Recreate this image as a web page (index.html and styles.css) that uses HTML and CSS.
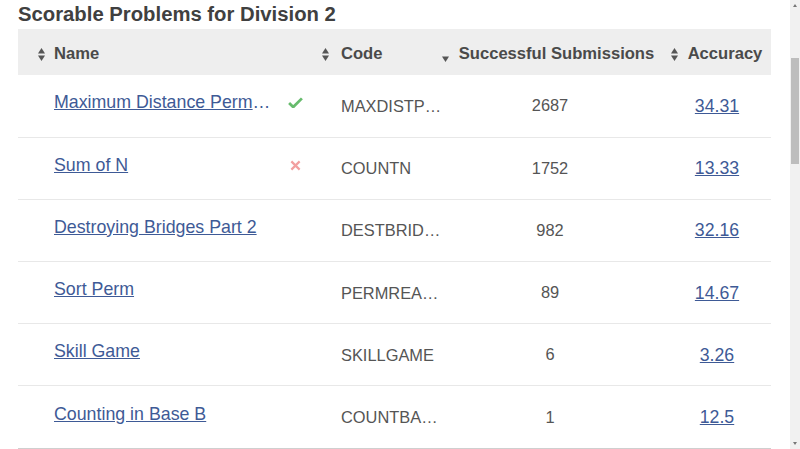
FILE: index.html
```html
<!DOCTYPE html>
<html lang="en">
<head>
<meta charset="utf-8">
<title>Scorable Problems for Division 2</title>
<link rel="stylesheet" href="styles.css">
</head>
<body>
<div class="page">
  <main class="main">
    <h2 class="title">Scorable Problems for Division 2</h2>
    <table class="problems">
      <colgroup>
        <col class="c-name"><col class="c-code"><col class="c-subs"><col class="c-acc">
      </colgroup>
      <thead>
        <tr>
          <th class="h-name"><span class="hcell"><svg class="sort" viewBox="0 0 7 13"><path d="M0 5.5 3.5 0 7 5.5Z"/><path d="M0 7.5 3.5 13 7 7.5Z"/></svg><span>Name</span></span></th>
          <th class="h-code"><span class="hcell"><svg class="sort" viewBox="0 0 7 13"><path d="M0 5.5 3.5 0 7 5.5Z"/><path d="M0 7.5 3.5 13 7 7.5Z"/></svg><span>Code</span></span></th>
          <th class="h-subs"><span class="hcell center"><svg class="sort desc" viewBox="0 0 7 13"><path d="M0 7.5 3.5 13 7 7.5Z"/></svg><span>Successful Submissions</span></span></th>
          <th class="h-acc"><span class="hcell center"><svg class="sort" viewBox="0 0 7 13"><path d="M0 5.5 3.5 0 7 5.5Z"/><path d="M0 7.5 3.5 13 7 7.5Z"/></svg><span>Accuracy</span></span></th>
        </tr>
      </thead>
      <tbody>
        <tr>
          <td class="d-name"><div class="namecell"><a class="plink" href="#">Maximum Distance Permutations</a><span class="status"><svg class="ok" viewBox="0 0 16 12"><path d="M1 6.5 5.5 11 15 1.5" /></svg></span></div></td>
          <td class="d-code"><span class="code">MAXDISTPERM</span></td>
          <td class="d-subs">2687</td>
          <td class="d-acc"><a href="#">34.31</a></td>
        </tr>
        <tr>
          <td class="d-name"><div class="namecell"><a class="plink" href="#">Sum of N</a><span class="status"><svg class="bad" viewBox="0 0 12 12"><path d="M1.5 1.5 10.5 10.5M10.5 1.5 1.5 10.5" /></svg></span></div></td>
          <td class="d-code"><span class="code">COUNTN</span></td>
          <td class="d-subs">1752</td>
          <td class="d-acc"><a href="#">13.33</a></td>
        </tr>
        <tr>
          <td class="d-name"><div class="namecell"><a class="plink" href="#">Destroying Bridges Part 2</a><span class="status"></span></div></td>
          <td class="d-code"><span class="code">DESTBRIDGE2</span></td>
          <td class="d-subs">982</td>
          <td class="d-acc"><a href="#">32.16</a></td>
        </tr>
        <tr>
          <td class="d-name"><div class="namecell"><a class="plink" href="#">Sort Perm</a><span class="status"></span></div></td>
          <td class="d-code"><span class="code">PERMREACH</span></td>
          <td class="d-subs">89</td>
          <td class="d-acc"><a href="#">14.67</a></td>
        </tr>
        <tr>
          <td class="d-name"><div class="namecell"><a class="plink" href="#">Skill Game</a><span class="status"></span></div></td>
          <td class="d-code"><span class="code">SKILLGAME</span></td>
          <td class="d-subs">6</td>
          <td class="d-acc"><a href="#">3.26</a></td>
        </tr>
        <tr class="last">
          <td class="d-name"><div class="namecell"><a class="plink" href="#">Counting in Base B</a><span class="status"></span></div></td>
          <td class="d-code"><span class="code">COUNTBASEB</span></td>
          <td class="d-subs">1</td>
          <td class="d-acc"><a href="#">12.5</a></td>
        </tr>
      </tbody>
    </table>
  </main>
  <div class="scrollbar" aria-hidden="true">
    <span class="arrow up"></span>
    <div class="track"><div class="thumb"></div></div>
    <span class="arrow down"></span>
  </div>
</div>
</body>
</html>
```

FILE: styles.css
```css
html, body {
  margin: 0;
  padding: 0;
  background: #fff;
  overflow: hidden;
}

body {
  font-family: "Liberation Sans", Arial, sans-serif;
  color: #555;
}

.page {
  display: flex;
  width: 800px;
  height: 449px;
  overflow: hidden;
}

.main {
  flex: 1;
  padding: 2px 19px 0 18px;
  min-width: 0;
}

.title {
  margin: 0 0 3px;
  font-size: 20.3px;
  line-height: 24px;
  font-weight: bold;
  color: #404040;
}

.problems {
  width: 753px;
  table-layout: fixed;
  border-collapse: collapse;
}

.c-name { width: 287px; }
.c-code { width: 135px; }
.c-subs { width: 220px; }
.c-acc { width: 111px; }

thead tr {
  background: #eeeeee;
  height: 46px;
}

th {
  padding: 4px 0 0;
  font-size: 16.6px;
  font-weight: bold;
  color: #4a4a4a;
  text-align: left;
  white-space: nowrap;
}

.hcell {
  display: flex;
  align-items: center;
  gap: 9px;
}

.hcell.center {
  justify-content: center;
}

.h-name { padding-left: 20px; }
.h-code { padding-left: 17px; }
.h-code .hcell { gap: 12px; }
.h-subs .hcell { gap: 10px; margin-left: -2px; margin-right: 2px; }
.h-acc .hcell { gap: 10px; margin-left: 2px; }

.sort {
  width: 7px;
  height: 13px;
  fill: #555;
  flex: none;
}

.sort.desc {
  transform: translateY(1px);
}

tbody tr {
  height: 62.2px;
  border-bottom: 1px solid #e8e8e8;
}

tbody tr.last {
  border-bottom-color: #cfcfcf;
}

td {
  padding: 0;
  font-size: 16.4px;
  color: #555;
  vertical-align: middle;
  white-space: nowrap;
}

a {
  color: #3e5a96;
  text-decoration: underline;
  text-underline-offset: 1px;
}

.d-name {
  padding-left: 36px;
}

.namecell {
  display: flex;
  align-items: center;
  padding-bottom: 6px;
}

.plink {
  font-size: 17.8px;
  display: block;
  max-width: 218px;
  overflow: hidden;
  text-overflow: ellipsis;
  white-space: nowrap;
  flex: none;
  width: 218px;
}

.status {
  display: flex;
  align-items: center;
  margin-left: 16px;
  width: 16px;
  height: 14px;
}

.ok {
  width: 15px;
  height: 11px;
  fill: none;
  stroke: #67bb6d;
  stroke-width: 3;
}

.bad {
  width: 11px;
  height: 11px;
  margin-left: 2px;
  fill: none;
  stroke: #f2a0a0;
  stroke-width: 2.4;
}

.d-code {
  padding-left: 36px;
  overflow: visible;
}

.code {
  display: block;
  width: 103px;
  overflow: hidden;
  text-overflow: ellipsis;
  white-space: nowrap;
  padding-top: 1px;
}

.d-subs {
  text-align: center;
}

.d-acc {
  text-align: center;
  padding-left: 3px;
  font-size: 17.7px;
  padding-top: 1px;
}

.scrollbar {
  width: 10px;
  flex: none;
  background: #f1f1f1;
  display: flex;
  flex-direction: column;
  align-items: center;
}

.arrow {
  width: 0;
  height: 0;
  border-left: 2.5px solid transparent;
  border-right: 2.5px solid transparent;
  flex: none;
}

.arrow.up {
  margin-top: 4px;
  border-bottom: 3px solid #777;
}

.arrow.down {
  margin-bottom: 4px;
  border-top: 3px solid #777;
}

.track {
  flex: 1;
  width: 100%;
  padding-top: 51px;
}

.thumb {
  margin: 0 1px;
  height: 106px;
  background: #bdbdbd;
}
```
